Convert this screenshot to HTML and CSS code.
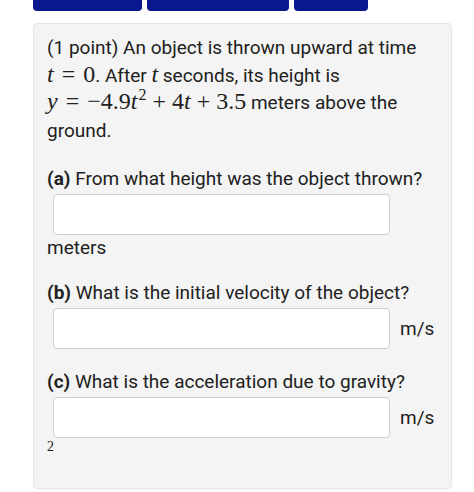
FILE: index.html
```html
<!DOCTYPE html>
<html lang="en">
<head>
    <meta charset="UTF-8">
    <meta name="viewport" content="width=device-width, initial-scale=1.0">
    <title>Problem</title>
    <link rel="stylesheet" href="styles.css">
</head>
<body>
    <div class="nav-buttons">
        <div class="nav-btn btn-1"></div>
        <div class="nav-btn btn-2"></div>
        <div class="nav-btn btn-3"></div>
    </div>

    <div class="problem">
        <p class="intro">
            (1 point) An object is thrown upward at time
            <span class="math"><i>t</i><span class="rel">=</span>0</span>. After <span class="math"><i>t</i></span> seconds, its height is
            <span class="math"><i>y</i><span class="rel">=</span>&minus;4.9<i>t</i><sup>2</sup><span class="bin">+</span>4<i>t</i><span class="bin">+</span>3.5</span> meters above the ground.
        </p>

        <div class="part part-a">
            <div class="question"><b>(a)</b> From what height was the object thrown?</div>
            <div class="answer">
                <input type="text" class="answer-box">
            </div>
            <div class="unit-line">meters</div>
        </div>

        <div class="part part-b">
            <div class="question"><b>(b)</b> What is the initial velocity of the object?</div>
            <div class="answer">
                <input type="text" class="answer-box">
                <span class="unit">m/s</span>
            </div>
        </div>

        <div class="part part-c">
            <div class="question"><b>(c)</b> What is the acceleration due to gravity?</div>
            <div class="answer">
                <input type="text" class="answer-box">
                <span class="unit">m/s</span>
            </div>
            <div class="exponent">2</div>
        </div>
    </div>
</body>
</html>
```

FILE: styles.css
```css
* {
    margin: 0;
    padding: 0;
    box-sizing: border-box;
}

body {
    background-color: white;
    color: #212121;
    font-family: Roboto, 'Liberation Sans', sans-serif;
    font-size: 19px;
}

.nav-buttons {
    display: flex;
    gap: 5px;
    padding-left: 33px;
}

.nav-btn {
    height: 11px;
    background-color: #0a1890;
    border-radius: 0 0 4px 4px;
}

.btn-1 { width: 109px; }
.btn-2 { width: 142px; }
.btn-3 { width: 74px; }

.problem {
    width: 419px;
    height: 466px;
    margin: 12px 0 0 33px;
    padding: 10px 12px 0 13px;
    background-color: #f4f4f4;
    border: 1px solid #e4e4e4;
    border-radius: 4px;
}

.intro {
    line-height: 27.7px;
}

.math {
    font-family: 'Liberation Serif', 'DejaVu Serif', serif;
    font-size: 24px;
    line-height: 1;
    white-space: nowrap;
}

.math sup {
    font-size: 16px;
    line-height: 0;
    margin-left: 1px;
}

.rel {
    margin: 0 8px;
}

.bin {
    margin: 0 6px;
}

.part {
    margin-top: 20px;
}

.question {
    line-height: 28px;
}

.answer {
    display: flex;
    align-items: center;
    gap: 10px;
    padding-left: 6px;
    margin-top: 1px;
}

.answer-box {
    width: 337px;
    height: 41px;
    background-color: white;
    border: 1px solid #cfcfcf;
    border-radius: 4px;
}

.unit-line {
    line-height: 26px;
}

.part-b {
    margin-top: 18px;
}

.part-c {
    margin-top: 19px;
}

.exponent {
    font-family: 'Liberation Serif', 'DejaVu Serif', serif;
    font-size: 14px;
    line-height: 16px;
    padding-top: 1px;
}
```
